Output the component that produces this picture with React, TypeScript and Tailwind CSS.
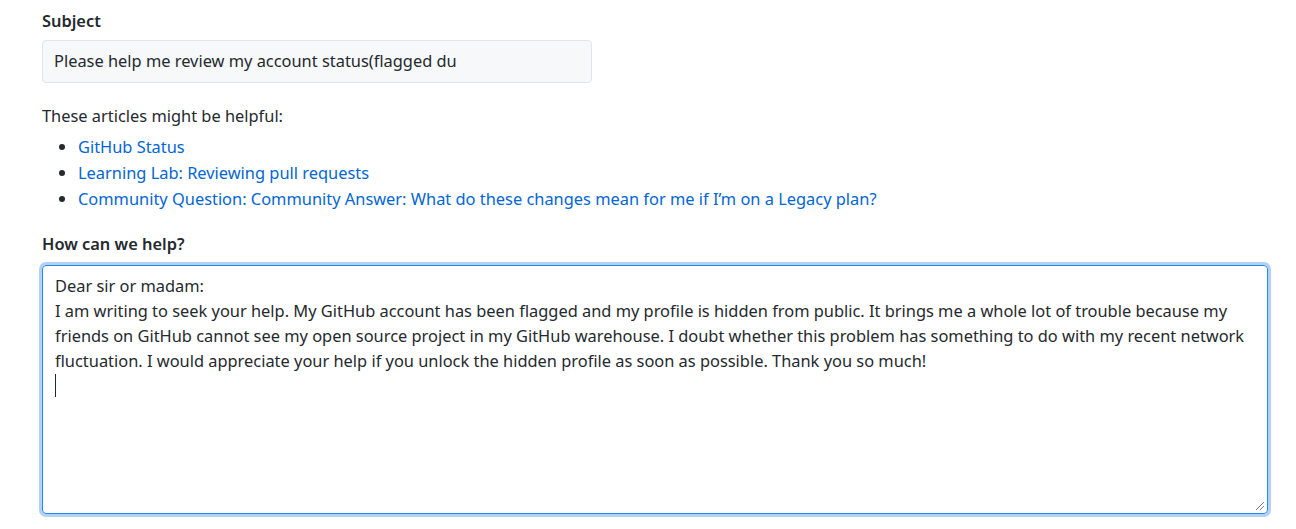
const lines = [
  "Dear sir or madam:",
  "I am writing to seek your help. My GitHub account has been flagged and my profile is hidden from public. It brings me a whole lot of trouble because my",
  "friends on GitHub cannot see my open source project in my GitHub warehouse. I doubt whether this problem has something to do with my recent network",
  "fluctuation. I would appreciate your help if you unlock the hidden profile as soon as possible. Thank you so much!",
]

const articles = [
  "GitHub Status",
  "Learning Lab: Reviewing pull requests",
  "Community Question: Community Answer: What do these changes mean for me if I’m on a Legacy plan?",
]

export default function App() {
  return (
    <div
      className="min-h-[529px] bg-white pl-[42px] pt-[9px] text-[16.4px] text-[#24292e]"
      style={{ fontFamily: "'Noto Sans', 'Open Sans', sans-serif" }}
    >
      {/* Assunto */}
      <label className="block font-semibold leading-[24px]">Subject</label>
      <div className="mt-[7px] flex h-[43px] w-[550px] items-center rounded-[4px] border border-[#e1e4e8] bg-[#f6f8fa] px-[11px]">
        Please help me review my account status(flagged du
      </div>

      {/* Artigos */}
      <p className="mt-[21px] leading-[24px]">These articles might be helpful:</p>
      <ul className="mt-[6px] list-disc pl-[36px]">
        {articles.map((a) => (
          <li key={a} className="leading-[26px] marker:text-[#24292e]">
            <a href="#" className="text-[#0366d6]">
              {a}
            </a>
          </li>
        ))}
      </ul>

      {/* Mensagem */}
      <label className="mt-[20px] block font-semibold leading-[24px]">How can we help?</label>
      <div className="mt-[9px] w-[1226px] rounded-[4px] shadow-[0_0_0_3px_rgba(3,102,214,0.3)]">
        <div className="relative h-[249px] rounded-[4px] border border-[#2188ff] bg-white px-[12px] pt-[7px]">
          {lines.map((l) => (
            <div key={l} className="whitespace-nowrap leading-[25px]">
              {l}
            </div>
          ))}
          <div className="mt-[1px] h-[23px] w-px bg-[#24292e]" />
          <svg
            className="absolute bottom-[2px] right-[2px]"
            width="10"
            height="10"
            viewBox="0 0 10 10"
          >
            <path d="M9 1 L1 9 M9 5 L5 9" stroke="#7a7a7a" strokeWidth="1" />
          </svg>
        </div>
      </div>
    </div>
  )
}
